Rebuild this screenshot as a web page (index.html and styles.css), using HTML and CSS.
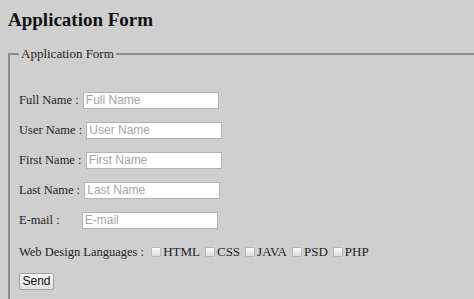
FILE: index.html
```html
<!DOCTYPE html>
<html>
<head>
<meta charset="utf-8">
<title>Application Form</title>
<link rel="stylesheet" href="styles.css">
</head>
<body>
<h2 class="title">Application Form</h2>
<form class="app-form">
<fieldset class="box">
<legend class="box-legend">Application Form</legend>
<div class="row first">Full Name : <input class="field" type="text" placeholder="Full Name"></div>
<div class="row">User Name : <input class="field" type="text" placeholder="User Name"></div>
<div class="row">First Name : <input class="field" type="text" placeholder="First Name"></div>
<div class="row">Last Name : <input class="field" type="text" placeholder="Last Name"></div>
<div class="row">E-mail : <input class="field email" type="text" placeholder="E-mail"></div>
<div class="row langs">Web Design Languages : <input class="check" type="checkbox"><span class="opt">HTML</span><input class="check" type="checkbox"><span class="opt">CSS</span><input class="check" type="checkbox"><span class="opt">JAVA</span><input class="check" type="checkbox"><span class="opt">PSD</span><input class="check" type="checkbox"><span class="opt">PHP</span></div>
<div class="row send-row"><button class="send" type="button">Send</button></div>
</fieldset>
</form>
</body>
</html>
```
FILE: styles.css
```css
html, body {
  margin: 0;
  padding: 0;
  background: #cfcfcf;
  overflow: hidden;
}
body {
  padding: 9px 0 0 8px;
  font-family: "Liberation Serif", "Times New Roman", serif;
  color: #1e1e1e;
  font-size: 12.5px;
}
.title {
  margin: 0;
  font-size: 19px;
  line-height: 21px;
  font-weight: bold;
  color: #111;
}
.app-form {
  margin: 0;
}
.box {
  margin: 16px 0 0 0;
  width: 600px;
  height: 400px;
  border: 2px solid #8d8d8d;
  padding: 0 0 0 9px;
  box-sizing: border-box;
}
.box-legend {
  padding: 0 2px;
  font-size: 13px;
  line-height: 15px;
  color: #1e1e1e;
}
.row {
  height: 18px;
  line-height: 18px;
  display: flex;
  align-items: center;
  white-space: pre;
  margin-top: 12px;
}
.row.first {
  margin-top: 30px;
}
.field {
  width: 136px;
  height: 17px;
  box-sizing: border-box;
  border: 1px solid #b4b4b4;
  background: #fff;
  padding: 0 2px;
  margin: 0 0 0 1px;
  font-family: "Liberation Sans", Arial, sans-serif;
  font-size: 12px;
  outline: none;
}
.field::placeholder {
  color: #a6a6a6;
}
.field.email {
  margin-left: 19px;
}
.langs {
  margin-top: 14px;
}
.opt {
  font-size: 13px;
}
.check {
  appearance: none;
  -webkit-appearance: none;
  width: 10px;
  height: 10px;
  margin: 0 2px 0 5px;
  box-sizing: border-box;
  border: 1px solid #b8b8b8;
  border-radius: 1px;
  background: linear-gradient(#fbfbfb, #dcdcdc);
}
.check:first-of-type {
  margin-left: 4px;
}
.send-row {
  margin-top: 11px;
}
.send {
  width: 35px;
  height: 17px;
  padding: 0;
  border: 1px solid #a2a2a2;
  border-radius: 2px;
  background: linear-gradient(#f6f6f6, #e2e2e2);
  font-family: "Liberation Sans", Arial, sans-serif;
  font-size: 12px;
  color: #111;
}
```
